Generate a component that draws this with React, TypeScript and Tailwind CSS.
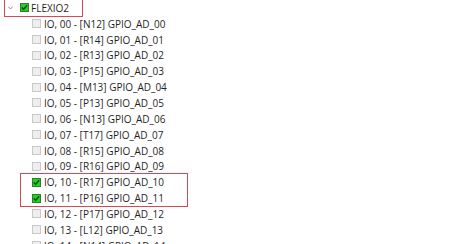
import React from 'react'

const pins: [string, string][] = [
  ['00', 'N12'],
  ['01', 'R14'],
  ['02', 'R13'],
  ['03', 'P15'],
  ['04', 'M13'],
  ['05', 'P13'],
  ['06', 'N13'],
  ['07', 'T17'],
  ['08', 'R15'],
  ['09', 'R16'],
  ['10', 'R17'],
  ['11', 'P16'],
  ['12', 'P17'],
  ['13', 'L12'],
  ['14', 'N14'],
]

const checkedPins = ['10', '11']

function Box({ checked }: { checked: boolean }) {
  if (checked) {
    return (
      <span className="flex h-[9px] w-[9px] shrink-0 items-center justify-center border border-[#2f7d2f] bg-[#1fd41f]">
        <svg width="7" height="7" viewBox="0 0 7 7" fill="none">
          <path d="M0.8 3.4 L2.7 5.3 L6.2 1.2" stroke="#143a14" strokeWidth="1.4" />
        </svg>
      </span>
    )
  }
  return <span className="h-[9px] w-[9px] shrink-0 border border-[#c9c9c9] bg-[#eeeeee]" />
}

export default function App() {
  return (
    <div
      className="relative h-[244px] w-[474px] overflow-hidden bg-white text-[10px] text-[#1f1f1f]"
      style={{ fontFamily: '"Open Sans", "Noto Sans", sans-serif' }}
    >
      <div className="flex flex-col">
        {/* parent node */}
        <div className="flex h-[15.85px] items-center">
          <svg className="ml-[8px] mr-[7px]" width="5" height="4" viewBox="0 0 5 4" fill="none">
            <path d="M0.3 0.6 L2.5 3 L4.7 0.6" stroke="#8a8a8a" strokeWidth="1" />
          </svg>
          <Box checked />
          <span className="ml-[2px] leading-none">FLEXIO2</span>
        </div>

        {pins.map(([io, ball]) => (
          <div key={io} className="flex h-[15.85px] items-center pl-[32px]">
            <Box checked={checkedPins.includes(io)} />
            <span className="ml-[3px] leading-none whitespace-nowrap">
              IO, {io} - [{ball}] GPIO_AD_{io}
            </span>
          </div>
        ))}
      </div>

      {/* highlight annotations */}
      <div className="pointer-events-none absolute left-[4px] top-[-2px] h-[19px] w-[79px] border border-[#d44a55]" />
      <div className="pointer-events-none absolute left-[20px] top-[173px] h-[34px] w-[168px] border border-[#d44a55]" />
    </div>
  )
}
